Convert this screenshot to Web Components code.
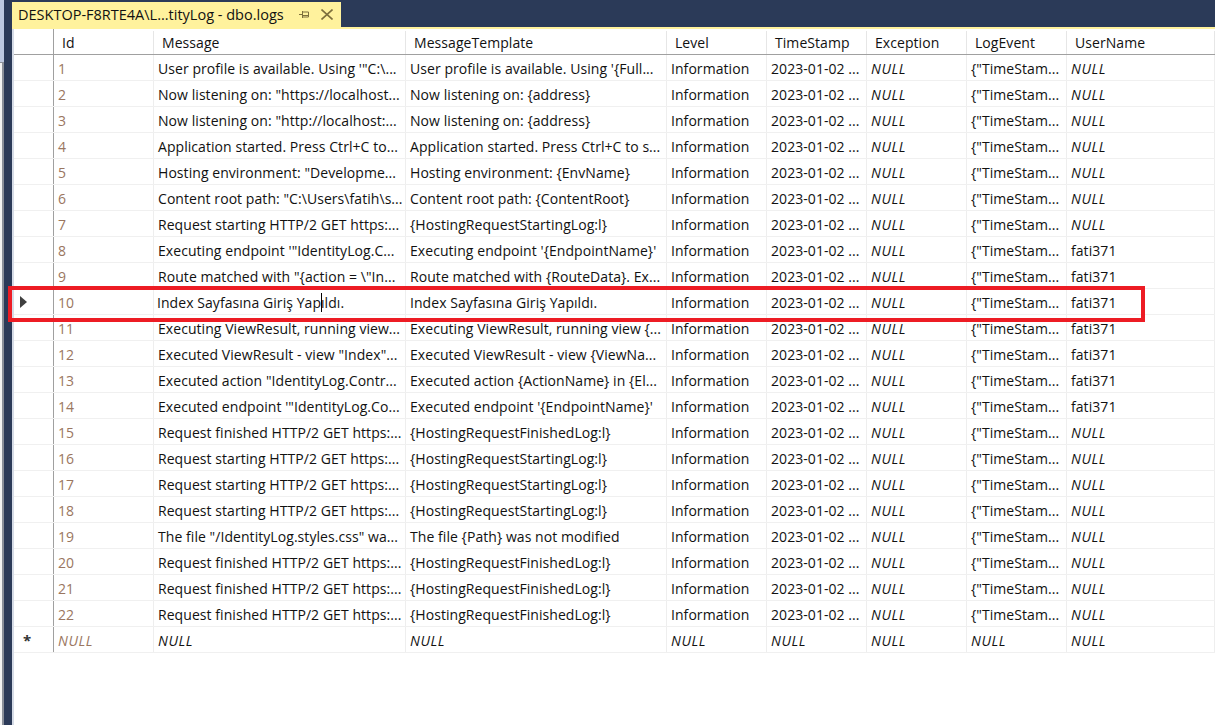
<!doctype html>
<html lang="en"><head><meta charset="utf-8"><title>dbo.logs</title>
<style>html,body{margin:0;height:100%;overflow:hidden;background:#fff}body{font:14px/19px "Open Sans","Liberation Sans",sans-serif;color:#111;letter-spacing:.06px}</style></head>
<body>
<log-window>
  <doc-tab slot="tabs">DESKTOP-F8RTE4A\L...tityLog - dbo.logs</doc-tab>
  <grid-view id="grid"></grid-view>
</log-window>
<script>
const COLS='40px 100px 252px 261px 100px 100px 100px 100px 1fr';
class LogWindow extends HTMLElement{constructor(){super();this.attachShadow({mode:'open'}).innerHTML=`<style>
:host{display:flex;height:725px;width:1215px;background:#2b3a58}
.edge{width:4px;display:flex;flex-direction:column;flex:none}
.edge .a{height:62px;background:#bcc8e0;border-bottom:1px solid #8a8f99;flex:none}
.edge .b{flex:1;background:#f2f2f2;border-right:2px solid #8a8f99}
.gutter{width:8px;flex:none}
.main{flex:1;display:flex;flex-direction:column;min-width:0}
.tabs{height:27px;padding-top:2px;box-sizing:border-box;display:flex;flex:none}
.line{height:2px;background:#fff29d;flex:none}
.body{flex:1;background:#fff;border-left:2px solid #d5dbe6}
</style><div class="edge"><div class="a"></div><div class="b"></div></div><div class="gutter"></div>
<div class="main"><div class="tabs"><slot name="tabs"></slot></div><div class="line"></div><div class="body"><slot></slot></div></div>`}}
class DocTab extends HTMLElement{constructor(){super();this.attachShadow({mode:'open'}).innerHTML=`<style>
:host{display:flex;align-items:center;width:329px;height:25px;box-sizing:border-box;padding:0 0 1px 6px;background:#fff29d;color:#111;white-space:nowrap;font-size:14.5px;letter-spacing:0}
.t{width:281px;flex:none}
svg{display:block;flex:none}
</style><span class="t"><slot></slot></span>
<svg width="10" height="9" viewBox="0 0 10 9" style="margin-right:12px"><path d="M0 4.500H3M3.500 1V8M3.500 2H9.500V7H3.500M3.500 5.500H9.500" fill="none" stroke="#7d6f3c" stroke-width="1"/></svg>
<svg width="12" height="11" viewBox="0 0 12 11"><path d="M.5 .5L11.500 10.500M11.500 .5L.5 10.500" fill="none" stroke="#7d6f3c" stroke-width="1.600"/></svg>`}}
class GridRow extends HTMLElement{constructor(){super();this.attachShadow({mode:'open'}).innerHTML=`<style>
:host{display:grid;grid-template-columns:${COLS};grid-template-rows:25px;height:26px;box-sizing:border-box;border-bottom:1px solid #f0f0f0}
:host([header]){border-bottom-color:#a0a0a0}
</style><slot></slot>`}}
class GridCell extends HTMLElement{constructor(){super();this.attachShadow({mode:'open'}).innerHTML=`<style>
:host{display:block;box-sizing:border-box;padding:4px 0 0 4px;border-right:1px solid #eeeeee;white-space:nowrap;min-width:0}
:host([last]){border-right:0}
:host([rowhead]){border-right-color:#a0a0a0;padding:0;display:flex;align-items:center;justify-content:flex-start}
:host([key]){color:#9a7660}
:host([nul]){font-style:italic;letter-spacing:.6px}
:host([hcell]){padding:0 0 0 8px;margin-top:2px;line-height:23px;border-right-color:#e6e6e6}
:host([hcell][rowhead]){border-right-color:#a0a0a0;margin-top:0}
:host([tight]){padding-left:3px}
</style><slot></slot>`}}
class RowMark extends HTMLElement{constructor(){super();this.attachShadow({mode:'open'})}
connectedCallback(){const k=this.getAttribute('kind');this.shadowRoot.innerHTML=`<style>
:host{display:block;margin-left:${k==='cur'?6:9}px}
span{display:block;font:700 15px/20px "Open Sans",sans-serif;color:#333}svg{display:block}
</style>`+(k==='cur'?'<svg width="7" height="12" viewBox="0 0 7 12"><path d="M0 0L7 6L0 12Z" fill="#404040"/></svg>':'<span>*</span>')}}
class TextCaret extends HTMLElement{constructor(){super();this.attachShadow({mode:'open'}).innerHTML=`<style>
:host{display:inline-block;width:0;height:19px;border-left:1px solid #000;margin-right:-1px;vertical-align:top}</style>`}}
class RedFrame extends HTMLElement{constructor(){super();this.attachShadow({mode:'open'}).innerHTML=`<style>
:host{display:block;position:absolute;left:8px;top:286px;width:1137px;height:36px;box-sizing:border-box;border:4px solid #ed1c24;pointer-events:none}</style>`}}
class GridView extends HTMLElement{constructor(){super();this.attachShadow({mode:'open'}).innerHTML=`<style>:host{display:block}</style><slot></slot>`}}
[['log-window',LogWindow],['doc-tab',DocTab],['grid-row',GridRow],['grid-cell',GridCell],['row-mark',RowMark],['text-caret',TextCaret],['red-frame',RedFrame],['grid-view',GridView]].forEach(([n,c])=>customElements.define(n,c));

const H=['Id','Message','MessageTemplate','Level','TimeStamp','Exception','LogEvent','UserName'];
const D=[
['User profile is available. Using \'"C:\\...','User profile is available. Using \'{Full...'],
['Now listening on: "https://localhost...','Now listening on: {address}'],
['Now listening on: "http://localhost:...','Now listening on: {address}'],
['Application started. Press Ctrl+C to...','Application started. Press Ctrl+C to s...'],
['Hosting environment: "Developme...','Hosting environment: {EnvName}'],
['Content root path: "C:\\Users\\fatih\\s...','Content root path: {ContentRoot}'],
['Request starting HTTP/2 GET https:...','{HostingRequestStartingLog:l}'],
['Executing endpoint \'"IdentityLog.C...','Executing endpoint \'{EndpointName}\''],
['Route matched with "{action = \\"In...','Route matched with {RouteData}. Ex...'],
['Index Sayfasına Giriş Yapıldı.','Index Sayfasına Giriş Yapıldı.'],
['Executing ViewResult, running view...','Executing ViewResult, running view {...'],
['Executed ViewResult - view "Index"...','Executed ViewResult - view {ViewNa...'],
['Executed action "IdentityLog.Contr...','Executed action {ActionName} in {El...'],
['Executed endpoint \'"IdentityLog.Co...','Executed endpoint \'{EndpointName}\''],
['Request finished HTTP/2 GET https:...','{HostingRequestFinishedLog:l}'],
['Request starting HTTP/2 GET https:...','{HostingRequestStartingLog:l}'],
['Request starting HTTP/2 GET https:...','{HostingRequestStartingLog:l}'],
['Request starting HTTP/2 GET https:...','{HostingRequestStartingLog:l}'],
['The file "/IdentityLog.styles.css" wa...','The file {Path} was not modified'],
['Request finished HTTP/2 GET https:...','{HostingRequestFinishedLog:l}'],
['Request finished HTTP/2 GET https:...','{HostingRequestFinishedLog:l}'],
['Request finished HTTP/2 GET https:...','{HostingRequestFinishedLog:l}']];
const grid=document.getElementById('grid');
function cell(txt,attrs=[]){const c=document.createElement('grid-cell');attrs.forEach(a=>c.setAttribute(a,''));c.textContent=txt;return c}
function row(cells,hdr){const r=document.createElement('grid-row');if(hdr)r.setAttribute('header','');r.append(...cells);grid.append(r);return r}
function mark(kind){const rh=cell('',['rowhead']);const m=document.createElement('row-mark');m.setAttribute('kind',kind);rh.append(m);return rh}
row([cell('',['rowhead','hcell']),...H.map(t=>cell(t,['hcell'])),cell('',['last','hcell'])],true);
D.forEach((d,i)=>{const n=i+1,un=(n>=8&&n<=14);
 const rh=n===10?mark('cur'):cell('',['rowhead']);
 let msg=cell(d[0]);
 if(n===10){msg=cell('',['tight']);msg.append('Index Sayfasına Giriş Yap',document.createElement('text-caret'),'ıldı.')}
 row([rh,cell(String(n),['key']),msg,cell(d[1]),cell('Information'),cell('2023-01-02 ...'),cell('NULL',['nul']),cell('{"TimeStam...'),un?cell('fati371'):cell('NULL',['nul']),cell('',['last'])]);
});
row([mark('new'),cell('NULL',['key','nul']),...Array(7).fill(0).map(()=>cell('NULL',['nul'])),cell('',['last'])]);
document.querySelector('log-window').append(document.createElement('red-frame'));
</script>
</body></html>
